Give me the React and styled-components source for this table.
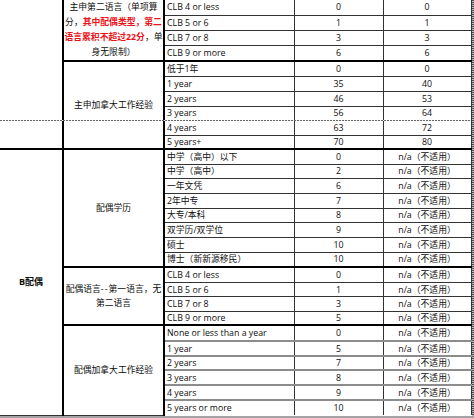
import React from 'react'
import styled, { createGlobalStyle, css } from 'styled-components'

const GlobalStyle = createGlobalStyle`
    html, body {
        margin: 0;
        padding: 0;
        background: #fff;
        overflow: hidden;
    }
    body {
        font-family: "Open Sans", "Noto Sans CJK SC", sans-serif;
        color: #0e0e0e;
    }
`
const Page = styled.div`
    width: 474px;
    height: 418px;
    display: flex;
    flex-direction: column;
    overflow: hidden;
`
const Sheet = styled.div`
    display: flex;
    position: relative;
`
const Table = styled.table`
    width: 471px;
    table-layout: fixed;
    border-collapse: collapse;
    font-size: 8.8px;
`
const Row = styled.tr`
    height: ${props => props.$h}px;
    ${props => props.$soft && css`
        & > td { border-top: 2px solid #8c8c8c; }
    `}
    ${props => props.$start && css`
        & > td { border-top: 2px solid #000; }
    `}
    ${props => props.$first && css`
        & > td { border-top: none; }
    `}
    ${props => props.$last && css`
        & > td { border-bottom: none; }
    `}
`
const Cell = styled.td`
    border: 1px solid #333;
    padding: 0 2px;
    vertical-align: middle;
    white-space: nowrap;
    overflow: hidden;
    line-height: 12px;
`
const GroupCell = styled(Cell)`
    border-left: none;
    border-right: 2px solid #000;
    text-align: center;
    font-weight: 700;
    font-size: 9px;
`
const LabelCell = styled(Cell)`
    border-right: 2px solid #000;
    text-align: center;
    padding: 0;
    line-height: ${props => props.$lh || 15}px;
`
const ItemCell = styled(Cell)`
    text-align: left;
    padding-left: 2px;
`
const ValueCell = styled(Cell)`
    text-align: center;
`
const Red = styled.span`
    color: #ee1119;
    font-weight: 700;
`
const Dash = styled.span`
    letter-spacing: 1px;
`
const PageBreak = styled.div`
    position: absolute;
    left: 0;
    top: 120px;
    width: 471px;
    height: 1px;
    background: repeating-linear-gradient(90deg, #666 0 2px, #f2f2f2 2px 3px);
`
const Hatch = styled.div`
    width: 3px;
    background: repeating-linear-gradient(180deg, #4a4a4a 0 1px, #c4c4c4 1px 2px);
`
const BottomBar = styled.div`
    height: 3px;
    width: 474px;
    background: #a3a3a3;
`

const sections = [
    {
        label: (
            <>
                主申第二语言（单项算<br />
                分，<Red>其中配偶类型，第二</Red><br />
                <Red>语言累积不超过22分</Red>，单<br />
                身无限制）
            </>
        ),
        heights: [15, 15, 15, 16],
        items: [
            ['CLB 4 or less', '0', '0'],
            ['CLB 5 or 6', '1', '1'],
            ['CLB 7 or 8', '3', '3'],
            ['CLB 9 or more', '6', '6'],
        ],
    },
    {
        label: '主申加拿大工作经验',
        heights: [15, 15, 15, 14, 15, 14],
        items: [
            ['低于1年', '0', '0'],
            ['1 year', '35', '40'],
            ['2 years', '46', '53'],
            ['3 years', '56', '64'],
            ['4 years', '63', '72'],
            ['5 years+', '70', '80'],
        ],
    },
    {
        label: '配偶学历',
        heights: [15, 14.5, 14.5, 15, 14.5, 15, 14.5, 15],
        items: [
            ['中学（高中）以下', '0', 'n/a（不适用）'],
            ['中学（高中）', '2', 'n/a（不适用）'],
            ['一年文凭', '6', 'n/a（不适用）'],
            ['2年中专', '7', 'n/a（不适用）'],
            ['大专/本科', '8', 'n/a（不适用）'],
            ['双学历/双学位', '9', 'n/a（不适用）'],
            ['硕士', '10', 'n/a（不适用）'],
            ['博士（新新源移民）', '10', 'n/a（不适用）'],
        ],
    },
    {
        label: (
            <>
                配偶语言<Dash>--</Dash>第一语言，无<br />
                第二语言
            </>
        ),
        lh: 14,
        heights: [15.5, 14, 14.5, 14],
        items: [
            ['CLB 4 or less', '0', 'n/a（不适用）'],
            ['CLB 5 or 6', '1', 'n/a（不适用）'],
            ['CLB 7 or 8', '3', 'n/a（不适用）'],
            ['CLB 9 or more', '5', 'n/a（不适用）'],
        ],
    },
    {
        label: '配偶加拿大工作经验',
        soft: true,
        heights: [16, 15, 14, 15, 15, 15],
        items: [
            ['None or less than a year', '0', 'n/a（不适用）'],
            ['1 year', '5', 'n/a（不适用）'],
            ['2 years', '7', 'n/a（不适用）'],
            ['3 years', '8', 'n/a（不适用）'],
            ['4 years', '9', 'n/a（不适用）'],
            ['5 years or more', '10', 'n/a（不适用）'],
        ],
    },
]

const groups = [
    { start: 0, title: '', span: sections[0].items.length + sections[1].items.length },
    { start: 2, title: 'B配偶', span: sections[2].items.length + sections[3].items.length + sections[4].items.length },
]

const App = () => {
    return (
        <Page>
            <GlobalStyle />
            <Sheet>
                <Table>
                    <colgroup>
                        <col style={{ width: 63 }} />
                        <col style={{ width: 101 }} />
                        <col style={{ width: 130 }} />
                        <col style={{ width: 89 }} />
                        <col style={{ width: 88 }} />
                    </colgroup>
                    <tbody>
                        {sections.map((section, si) =>
                            section.items.map((item, i) => {
                                const group = groups.find(g => g.start === si)
                                const isLast = si === sections.length - 1 && i === section.items.length - 1
                                return (
                                    <Row
                                        key={`${si}-${i}`}
                                        $h={section.heights[i]}
                                        $first={si === 0 && i === 0}
                                        $start={si > 0 && i === 0}
                                        $soft={section.soft && i > 0}
                                        $last={isLast}
                                    >
                                        {group && i === 0 && (
                                            <GroupCell rowSpan={group.span}>{group.title}</GroupCell>
                                        )}
                                        {i === 0 && (
                                            <LabelCell rowSpan={section.items.length} $lh={section.lh}>
                                                {section.label}
                                            </LabelCell>
                                        )}
                                        <ItemCell>{item[0]}</ItemCell>
                                        <ValueCell>{item[1]}</ValueCell>
                                        <ValueCell>{item[2]}</ValueCell>
                                    </Row>
                                )
                            })
                        )}
                    </tbody>
                </Table>
                <Hatch />
                <PageBreak />
            </Sheet>
            <BottomBar />
        </Page>
    )
}

export default App
